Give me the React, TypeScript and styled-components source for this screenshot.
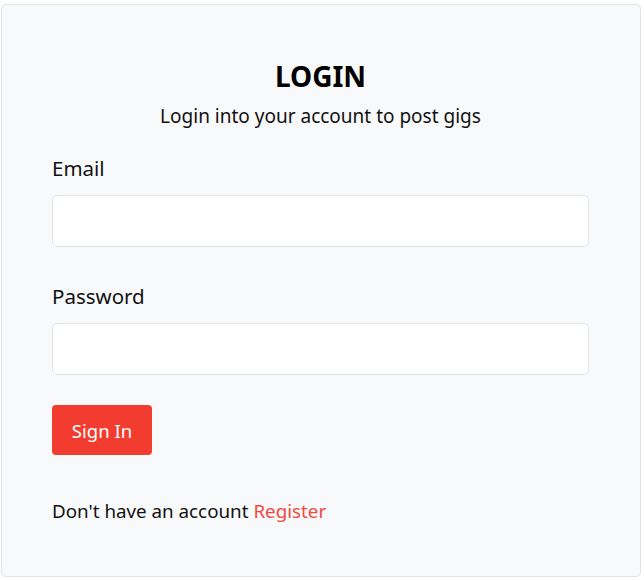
import React, { FC } from "react";
import styled, { createGlobalStyle } from "styled-components";

const GlobalStyle = createGlobalStyle`
  body {
    margin: 0;
    background: #ffffff;
    font-family: "Noto Sans", "Open Sans", sans-serif;
    color: #111;
  }
  * {
    box-sizing: border-box;
  }
`;

const App: FC = () => {
  return (
    <>
      <GlobalStyle />
      <Page>
        <Card>
          <Title>LOGIN</Title>
          <Subtitle>Login into your account to post gigs</Subtitle>
          <Form onSubmit={(e) => e.preventDefault()}>
            <Field>
              <Label htmlFor="email">Email</Label>
              <Input id="email" type="email" />
            </Field>
            <Field>
              <Label htmlFor="password">Password</Label>
              <Input id="password" type="password" />
            </Field>
            <SubmitButton type="submit">Sign In</SubmitButton>
          </Form>
          <Footer>
            Don't have an account <RegisterLink href="#">Register</RegisterLink>
          </Footer>
        </Card>
      </Page>
    </>
  );
};

const Page = styled.div`
  padding: 4px 3px 3px 1px;
`;

const Card = styled.div`
  width: 640px;
  height: 573px;
  background: #f8f9fb;
  border: 1px solid #e2e3e6;
  border-radius: 5px;
  padding: 54px 51px 0 50px;
  display: flex;
  flex-direction: column;
`;

const Title = styled.h2`
  margin: 0;
  text-align: center;
  font-size: 28px;
  font-weight: 700;
  line-height: 34px;
  color: #000;
`;

const Subtitle = styled.p`
  margin: 10px 0 0 0;
  text-align: center;
  font-size: 19px;
  line-height: 26px;
  color: #111;
`;

const Form = styled.form`
  margin-top: 25px;
  display: flex;
  flex-direction: column;
`;

const Field = styled.div`
  display: flex;
  flex-direction: column;

  & + & {
    margin-top: 35px;
  }
`;

const Label = styled.label`
  font-size: 20.5px;
  line-height: 28px;
  margin-bottom: 13px;
  color: #111;
`;

const Input = styled.input`
  height: 52px;
  width: 100%;
  border: 1px solid #e3e4e7;
  border-radius: 5px;
  background: #fff;
  padding: 0 14px;
  font-family: inherit;
  font-size: 18px;
  outline: none;
`;

const SubmitButton = styled.button`
  align-self: flex-start;
  width: 100px;
  height: 50px;
  margin-top: 30px;
  border: none;
  border-radius: 4px;
  background: #f13c2f;
  color: #fff;
  font-family: inherit;
  font-size: 18.5px;
  cursor: pointer;
`;

const Footer = styled.p`
  margin: 43px 0 0 0;
  font-size: 18.8px;
  line-height: 26px;
  color: #111;
`;

const RegisterLink = styled.a`
  color: #f34a3e;
  text-decoration: none;
`;

export default App;
